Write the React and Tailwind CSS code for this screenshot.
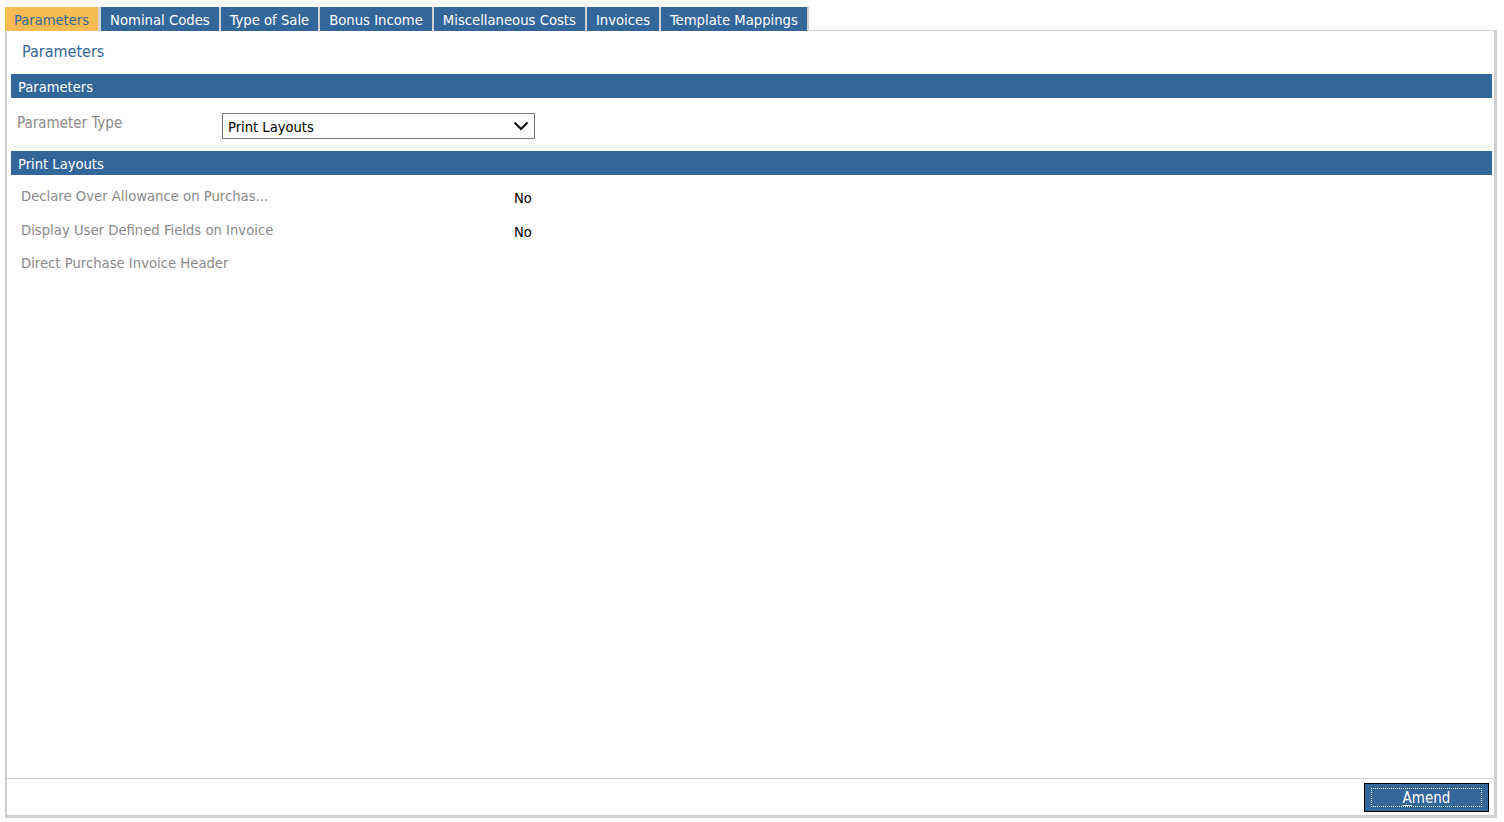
import React from "react";

const tabs = [
    "Parameters",
    "Nominal Codes",
    "Type of Sale",
    "Bonus Income",
    "Miscellaneous Costs",
    "Invoices",
    "Template Mappings",
];

const rows = [
    { label: "Declare Over Allowance on Purchas...", value: "No" },
    { label: "Display User Defined Fields on Invoice", value: "No" },
    { label: "Direct Purchase Invoice Header", value: "" },
];

const SectionBar = ({ title }) => (
    <div className="ml-[4px] mr-[2px] h-[24px] bg-[#336699] px-[7px] text-[14.6px] leading-[25px] text-white">
        {title}
    </div>
);

const App = () => {
    return (
        <div
            className="flex h-[822px] w-full flex-col bg-white pt-[7px] pl-[5px] pr-[7px] pb-[4px] text-[14.6px]"
            style={{ fontFamily: "'DejaVu Sans Condensed', 'Liberation Sans', Arial, sans-serif" }}
        >
            {/* tab strip */}
            <div className="flex h-[25px] shrink-0">
                {tabs.map((tab, i) => (
                    <div
                        key={tab}
                        className={
                            i === 0
                                ? "h-[24px] border-r-[3px] border-[#d6d6d6] bg-[#f6bb52] px-[9px] leading-[26px] text-[#336699]"
                                : "h-[24px] border-r-[2px] border-[#d0d0d0] bg-[#336699] px-[9px] text-[14.7px] leading-[25px] text-white"
                        }
                    >
                        {tab}
                    </div>
                ))}
                <div className="h-[24px] flex-1 border-b border-[#cfcfcf]"></div>
            </div>

            {/* panel */}
            <div className="-mt-[1px] flex flex-1 flex-col border-l-2 border-r-[3px] border-b-[3px] border-[#cfcfcf]">
                <div className="flex flex-1 flex-col">
                    <div className="pt-[11px] pl-[15px] text-[16px] leading-[20px] text-[#336699]">
                        Parameters
                    </div>
                    <div className="mt-[12px]">
                        <SectionBar title="Parameters" />
                    </div>

                    <div className="flex h-[53px] pt-[15px] pl-[10px]">
                        <div className="w-[205px] pt-[1px] text-[15px] leading-[18px] text-[#8a8a8a]">
                            Parameter Type
                        </div>
                        <div className="flex h-[26px] w-[313px] items-center justify-between border border-[#7a7a7a] pl-[5px] pr-[5px] text-black">
                            <span className="pt-[2px]">Print Layouts</span>
                            <svg width="16" height="10" viewBox="0 0 16 10">
                                <polyline
                                    points="1.5,1.5 8,8 14.5,1.5"
                                    fill="none"
                                    stroke="#111"
                                    strokeWidth="2.2"
                                />
                            </svg>
                        </div>
                    </div>

                    <SectionBar title="Print Layouts" />

                    <div className="pt-[11px] pl-[14px]">
                        {rows.map((row) => (
                            <div key={row.label} className="flex h-[33.5px]">
                                <div className="w-[493px] text-[14.7px] leading-[20px] text-[#8a8a8a]">
                                    {row.label}
                                </div>
                                <div className="pt-[2px] leading-[20px] text-black">
                                    {row.value}
                                </div>
                            </div>
                        ))}
                    </div>
                </div>

                {/* footer */}
                <div className="flex h-[37px] shrink-0 justify-end border-t border-[#cfcfcf] pt-[4px] pr-[5px]">
                    <button className="flex h-[29px] w-[125px] items-center justify-center border border-black bg-[#336699] px-[6px] py-[4px] text-[15px] text-white">
                        <span className="flex h-full w-full items-center justify-center border border-dotted border-white leading-[18px]">
                            <span className="underline underline-offset-2">A</span>mend
                        </span>
                    </button>
                </div>
            </div>
        </div>
    );
};

export default App;
